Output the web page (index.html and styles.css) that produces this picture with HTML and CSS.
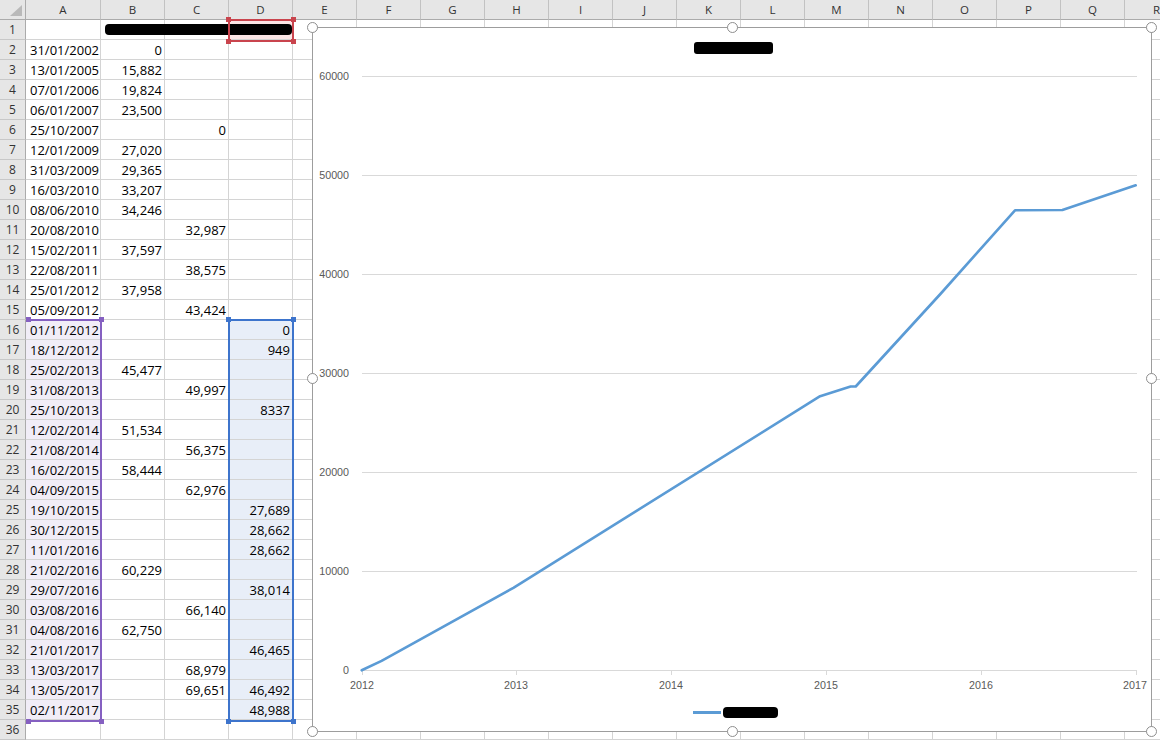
FILE: index.html
```html
<!DOCTYPE html>
<html>

<head>
	<title>Book1 - Excel</title>
	<link rel="stylesheet" href="styles.css">
</head>

<body>
	<div class="book">
		<div class="sheet" id="sheet"></div>

		<!-- header text in B1:D1 is blacked out -->
		<div class="scribble"></div>

		<div class="range range-red">
			<span class="knob tl"></span><span class="knob tr"></span>
			<span class="knob bl"></span><span class="knob br"></span>
		</div>
		<div class="range range-purple">
			<span class="knob tl"></span><span class="knob tr"></span>
			<span class="knob bl"></span><span class="knob br"></span>
		</div>
		<div class="range range-blue">
			<span class="knob tl"></span><span class="knob tr"></span>
			<span class="knob bl"></span><span class="knob br"></span>
		</div>

		<div class="chart">
			<svg class="plot" width="838" height="703" viewBox="313 28 838 703">
				<rect x="694" y="42" width="79" height="12" rx="3" fill="#000" />

				<g stroke="#d9d9d9" stroke-width="1">
					<line x1="362" y1="76.5" x2="1137" y2="76.5" />
					<line x1="362" y1="175.5" x2="1137" y2="175.5" />
					<line x1="362" y1="274.5" x2="1137" y2="274.5" />
					<line x1="362" y1="373.5" x2="1137" y2="373.5" />
					<line x1="362" y1="472.5" x2="1137" y2="472.5" />
					<line x1="362" y1="571.5" x2="1137" y2="571.5" />
					<line x1="362" y1="670.5" x2="1137" y2="670.5" />
					<line x1="362.5" y1="670" x2="362.5" y2="675" />
					<line x1="516.5" y1="670" x2="516.5" y2="675" />
					<line x1="671.5" y1="670" x2="671.5" y2="675" />
					<line x1="826.5" y1="670" x2="826.5" y2="675" />
					<line x1="981.5" y1="670" x2="981.5" y2="675" />
					<line x1="1136.5" y1="670" x2="1136.5" y2="675" />
				</g>

				<g class="axis-y">
					<text x="349" y="80">60000</text>
					<text x="349" y="179">50000</text>
					<text x="349" y="278">40000</text>
					<text x="349" y="377">30000</text>
					<text x="349" y="476">20000</text>
					<text x="349" y="575">10000</text>
					<text x="349" y="674">0</text>
				</g>
				<g class="axis-x">
					<text x="362" y="689">2012</text>
					<text x="516" y="689">2013</text>
					<text x="671" y="689">2014</text>
					<text x="826" y="689">2015</text>
					<text x="981" y="689">2016</text>
					<text x="1135" y="689">2017</text>
				</g>

				<polyline class="series" points="361.7,670.3 381.6,660.9 513.4,587.8 820.1,396.2 850.6,386.5 855.7,386.5 940.4,294 1015,210.3 1062.4,210 1135.7,185.3" />

				<line x1="693" y1="712.5" x2="721" y2="712.5" stroke="#5b9bd5" stroke-width="3" />
				<rect x="723" y="707" width="55" height="11" rx="4" fill="#000" />
			</svg>

			<span class="handle h-tl"></span>
			<span class="handle h-tc"></span>
			<span class="handle h-tr"></span>
			<span class="handle h-ml"></span>
			<span class="handle h-mr"></span>
			<span class="handle h-bl"></span>
			<span class="handle h-bc"></span>
			<span class="handle h-br"></span>
		</div>
	</div>

	<script src="script.js"></script>
</body>

</html>
```

FILE: styles.css
```css
body {
	margin: 0;
	background: #fff;
	font-family: "Open Sans", "Liberation Sans", sans-serif;
}

.book {
	position: relative;
	width: 1160px;
	height: 740px;
	overflow: hidden;
}

.sheet {
	display: grid;
	grid-template-columns: 26px 75px repeat(17, 64px);
	grid-auto-rows: 20px;
}

.cell {
	box-sizing: border-box;
	border-right: 1px solid #d4d4d4;
	border-bottom: 1px solid #d4d4d4;
	padding: 0 4px;
	font-size: 13px;
	line-height: 21px;
	color: #000;
	white-space: nowrap;
	overflow: hidden;
}

.num {
	text-align: right;
	padding: 0 2px 0 0;
}

.head {
	background: #e6e6e6;
	border-right-color: #c2c2c2;
	border-bottom-color: #ababab;
	padding: 0;
	text-align: center;
	font-size: 11.5px;
	line-height: 19px;
	color: #333;
}

.rownum {
	background: #e6e6e6;
	border-right-color: #ababab;
	border-bottom-color: #c8c8c8;
	padding: 0;
	text-align: center;
	font-size: 12px;
	line-height: 20px;
	color: #333;
}

.corner {
	position: relative;
	background: #e6e6e6;
	border-right-color: #ababab;
	border-bottom-color: #ababab;
}

.corner::after {
	content: "";
	position: absolute;
	right: 3px;
	bottom: 3px;
	border-left: 12px solid transparent;
	border-bottom: 11px solid #b9b9b9;
}

.pick-red {
	background: #fbe5e5;
}

.pick-purple {
	background: #f1edf7;
}

.pick-blue {
	background: #e8eef8;
}

.scribble {
	position: absolute;
	left: 105px;
	top: 24px;
	width: 187px;
	height: 11px;
	background: #000;
	border-radius: 4px;
}

/* coloured range outlines, like excel draws for a selected series */
.range {
	position: absolute;
	box-sizing: border-box;
	border: 2px solid;
}

.range-red {
	left: 228px;
	top: 19px;
	width: 66px;
	height: 23px;
	border-color: #c9444d;
}

.range-purple {
	left: 26px;
	top: 319px;
	width: 76px;
	height: 403px;
	border-color: #8560c1;
	border-left: none;
}

.range-blue {
	left: 228px;
	top: 319px;
	width: 66px;
	height: 403px;
	border-color: #3d74cc;
}

.knob {
	position: absolute;
	width: 5px;
	height: 5px;
	background: inherit;
}

.range-red .knob {
	background: #c9444d;
}

.range-purple .knob {
	background: #8560c1;
}

.range-blue .knob {
	background: #3d74cc;
}

.knob.tl {
	left: -4px;
	top: -4px;
}

.knob.tr {
	right: -4px;
	top: -4px;
}

.knob.bl {
	left: -4px;
	bottom: -4px;
}

.knob.br {
	right: -4px;
	bottom: -4px;
}

.range-purple .knob.tl,
.range-purple .knob.bl {
	left: 0;
}

.chart {
	position: absolute;
	left: 312px;
	top: 27px;
	width: 840px;
	height: 705px;
	box-sizing: border-box;
	border: 1px solid #9d9d9d;
	background: #fff;
}

.plot {
	position: absolute;
	left: 0;
	top: 0;
}

.axis-y text,
.axis-x text {
	font-family: "Liberation Sans", sans-serif;
	font-size: 10.7px;
	fill: #595959;
}

.axis-y text {
	text-anchor: end;
}

.axis-x text {
	text-anchor: middle;
}

.series {
	fill: none;
	stroke: #5b9bd5;
	stroke-width: 2.6;
	stroke-linejoin: round;
	stroke-linecap: round;
}

.handle {
	position: absolute;
	box-sizing: border-box;
	width: 11px;
	height: 11px;
	border: 1.5px solid #8e8e8e;
	border-radius: 50%;
	background: #fff;
}

.h-tl,
.h-tc,
.h-tr {
	top: -6px;
}

.h-ml,
.h-mr {
	top: 345px;
}

.h-bl,
.h-bc,
.h-br {
	top: 698px;
}

.h-tl,
.h-ml,
.h-bl {
	left: -6px;
}

.h-tc,
.h-bc {
	left: 414px;
}

.h-tr,
.h-mr,
.h-br {
	left: 833px;
}
```

FILE: script.js
```js
var columns = ["A", "B", "C", "D", "E", "F", "G", "H", "I", "J", "K", "L", "M", "N", "O", "P", "Q", "R"];

// rows 2 to 35: date, B, C, D
var data = [
	["31/01/2002", "0", "", ""],
	["13/01/2005", "15,882", "", ""],
	["07/01/2006", "19,824", "", ""],
	["06/01/2007", "23,500", "", ""],
	["25/10/2007", "", "0", ""],
	["12/01/2009", "27,020", "", ""],
	["31/03/2009", "29,365", "", ""],
	["16/03/2010", "33,207", "", ""],
	["08/06/2010", "34,246", "", ""],
	["20/08/2010", "", "32,987", ""],
	["15/02/2011", "37,597", "", ""],
	["22/08/2011", "", "38,575", ""],
	["25/01/2012", "37,958", "", ""],
	["05/09/2012", "", "43,424", ""],
	["01/11/2012", "", "", "0"],
	["18/12/2012", "", "", "949"],
	["25/02/2013", "45,477", "", ""],
	["31/08/2013", "", "49,997", ""],
	["25/10/2013", "", "", "8337"],
	["12/02/2014", "51,534", "", ""],
	["21/08/2014", "", "56,375", ""],
	["16/02/2015", "58,444", "", ""],
	["04/09/2015", "", "62,976", ""],
	["19/10/2015", "", "", "27,689"],
	["30/12/2015", "", "", "28,662"],
	["11/01/2016", "", "", "28,662"],
	["21/02/2016", "60,229", "", ""],
	["29/07/2016", "", "", "38,014"],
	["03/08/2016", "", "66,140", ""],
	["04/08/2016", "62,750", "", ""],
	["21/01/2017", "", "", "46,465"],
	["13/03/2017", "", "68,979", ""],
	["13/05/2017", "", "69,651", "46,492"],
	["02/11/2017", "", "", "48,988"]
];

function makeCell(text, cls) {
	var div = document.createElement("div");
	div.className = "cell " + cls;
	div.textContent = text;
	return div;
}

var sheet = document.getElementById("sheet");

sheet.appendChild(makeCell("", "corner"));
for (var c = 0; c < columns.length; c++) {
	sheet.appendChild(makeCell(columns[c], "head"));
}

for (var r = 1; r <= 36; r++) {
	sheet.appendChild(makeCell(r, "rownum"));
	var values = data[r - 2] || [];
	for (var c = 0; c < columns.length; c++) {
		var cls = c == 0 ? "" : "num";
		if (c == 0 && r >= 16 && r <= 35) cls += " pick-purple";
		if (c == 3 && r >= 16 && r <= 35) cls += " pick-blue";
		if (c == 3 && r == 1) cls += " pick-red";
		sheet.appendChild(makeCell(values[c] || "", cls));
	}
}
```
